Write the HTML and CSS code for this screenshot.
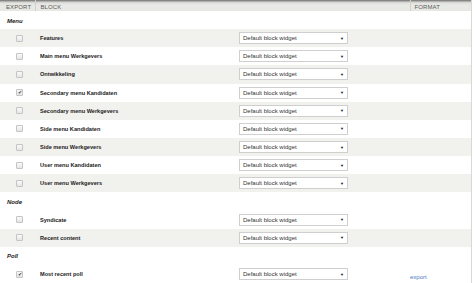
FILE: index.html
```html
<!DOCTYPE html>
<html>
<head>
<meta charset="utf-8">
<link rel="stylesheet" href="styles.css">
</head>
<body>
<table class="blocks">
  <colgroup>
    <col class="c-export"><col class="c-label"><col class="c-widget"><col class="c-format">
  </colgroup>
  <thead>
    <tr>
      <th class="h-export">EXPORT</th>
      <th class="h-block" colspan="2">BLOCK</th>
      <th class="h-format">FORMAT</th>
    </tr>
  </thead>
  <tbody>
    <tr class="section"><td colspan="4">Menu</td></tr>
    <tr class="odd"><td class="cb"><span class="box"></span></td><td class="name">Features</td><td class="wd"><div class="sel"><span>Default block widget</span><i>▼</i></div></td><td></td></tr>
    <tr class="even"><td class="cb"><span class="box"></span></td><td class="name">Main menu Werkgevers</td><td class="wd"><div class="sel"><span>Default block widget</span><i>▼</i></div></td><td></td></tr>
    <tr class="odd"><td class="cb"><span class="box"></span></td><td class="name">Ontwikkeling</td><td class="wd"><div class="sel"><span>Default block widget</span><i>▼</i></div></td><td></td></tr>
    <tr class="even"><td class="cb"><span class="box checked">✔</span></td><td class="name">Secondary menu Kandidaten</td><td class="wd"><div class="sel"><span>Default block widget</span><i>▼</i></div></td><td></td></tr>
    <tr class="odd"><td class="cb"><span class="box"></span></td><td class="name">Secondary menu Werkgevers</td><td class="wd"><div class="sel"><span>Default block widget</span><i>▼</i></div></td><td></td></tr>
    <tr class="even"><td class="cb"><span class="box"></span></td><td class="name">Side menu Kandidaten</td><td class="wd"><div class="sel"><span>Default block widget</span><i>▼</i></div></td><td></td></tr>
    <tr class="odd"><td class="cb"><span class="box"></span></td><td class="name">Side menu Werkgevers</td><td class="wd"><div class="sel"><span>Default block widget</span><i>▼</i></div></td><td></td></tr>
    <tr class="even"><td class="cb"><span class="box"></span></td><td class="name">User menu Kandidaten</td><td class="wd"><div class="sel"><span>Default block widget</span><i>▼</i></div></td><td></td></tr>
    <tr class="odd"><td class="cb"><span class="box"></span></td><td class="name">User menu Werkgevers</td><td class="wd"><div class="sel"><span>Default block widget</span><i>▼</i></div></td><td></td></tr>
    <tr class="section"><td colspan="4">Node</td></tr>
    <tr class="even"><td class="cb"><span class="box"></span></td><td class="name">Syndicate</td><td class="wd"><div class="sel"><span>Default block widget</span><i>▼</i></div></td><td></td></tr>
    <tr class="odd"><td class="cb"><span class="box"></span></td><td class="name">Recent content</td><td class="wd"><div class="sel"><span>Default block widget</span><i>▼</i></div></td><td></td></tr>
    <tr class="section"><td colspan="4">Poll</td></tr>
    <tr class="even"><td class="cb"><span class="box checked">✔</span></td><td class="name">Most recent poll</td><td class="wd"><div class="sel"><span>Default block widget</span><i>▼</i></div></td><td class="fmt"><a href="#">export</a></td></tr>
  </tbody>
</table>
</body>
</html>
```

FILE: styles.css
```css
html, body {
  margin: 0;
  padding: 0;
  background: #fff;
}
body {
  font-family: "Liberation Sans", Arial, sans-serif;
  color: #222;
}
.blocks {
  border-collapse: collapse;
  table-layout: fixed;
  width: 471px;
  border-right: 1px solid #d8d8d4;
}
.c-export { width: 35px; }
.c-label { width: 204px; }
.c-widget { width: 171px; }
.c-format { width: 61px; }

thead th {
  height: 11px;
  padding: 0;
  text-align: left;
  font-weight: normal;
  font-size: 6px;
  color: #5a5a58;
  letter-spacing: 0.1px;
  background: linear-gradient(#6f6f6d 0, #9a9a98 1px, #c8c8c5 2px, #e2e2de 3px, #e9e9e5 6px, #e6e6e2 11px);
  vertical-align: bottom;
  line-height: 8px;
}
.h-export { padding-left: 6px; border-right: 1px solid #d0d0cc; }
.h-block { padding-left: 5px; border-right: 1px solid #d0d0cc; }
.h-format { padding-left: 4px; }

tbody tr { height: 18.15px; }
tbody td {
  padding: 0;
  vertical-align: middle;
}
tr.odd td { background: #f1f1ed; }
tr.even td, tr.section td { background: #fff; }

tr.section td {
  font-size: 6px;
  font-weight: bold;
  font-style: italic;
  padding-left: 7px;
  padding-top: 1px;
  color: #222;
}

td.cb { padding-left: 16px; }
.box {
  display: block;
  width: 5px;
  height: 5px;
  border: 1px solid #c4c4c4;
  border-radius: 1px;
  background: linear-gradient(#fafafa, #e6e6e6);
  font-size: 5px;
  line-height: 5px;
  text-align: center;
  color: #333;
  overflow: hidden;
}
td.name {
  font-size: 5.6px;
  font-weight: bold;
  padding-left: 5px;
  color: #222;
}
.sel {
  width: 107px;
  height: 10px;
  border: 1px solid #cfcfcf;
  background: #fff;
  display: flex;
  align-items: center;
  justify-content: space-between;
  box-sizing: content-box;
  font-size: 6px;
  color: #333;
}
.sel span { padding-left: 3px; }
.sel i {
  font-style: normal;
  font-size: 4px;
  padding-right: 3px;
  color: #111;
}
td.fmt { padding-left: 0; }
td.fmt a {
  font-size: 6px;
  color: #4a78c8;
  text-decoration: none;
}
```
